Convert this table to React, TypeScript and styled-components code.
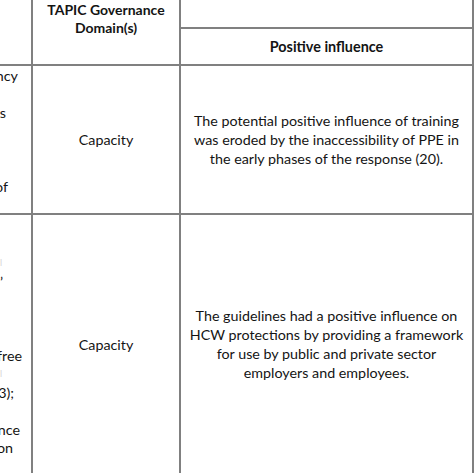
import React from 'react';
import styled, { createGlobalStyle } from 'styled-components';

const GlobalStyle = createGlobalStyle`
  html, body {
    margin: 0;
    padding: 0;
    background: #ffffff;
  }
  body {
    font-family: Lato, 'Open Sans', sans-serif;
    color: #141414;
  }
`;

const Page = styled.div`
  width: 474px;
  height: 474px;
  overflow: hidden;
  background: #ffffff;
`;

const Table = styled.div`
  display: grid;
  grid-template-columns: 33px 148px 293px;
  grid-template-rows: 66px 149px 258px;
`;

// $open: the row continues past the crop, so no bottom rule is drawn
const Cell = styled.div<{ $align?: 'top' | 'center'; $open?: boolean }>`
  box-sizing: border-box;
  border-right: 2px solid #808080;
  border-bottom: ${(p) => (p.$open ? 'none' : '2px solid #808080')};
  display: flex;
  flex-direction: column;
  justify-content: ${(p) => (p.$align === 'top' ? 'flex-start' : 'center')};
  align-items: center;
  text-align: center;
  overflow: hidden;
`;

const ClippedCell = styled(Cell)<{ $top: number }>`
  align-items: stretch;
  justify-content: flex-start;
  padding-top: ${(p) => p.$top}px;
`;

const HeadText = styled.div`
  font-weight: 700;
  font-size: 14px;
  line-height: 18px;
  padding-top: 1px;
`;

const SplitHead = styled.div`
  box-sizing: border-box;
  border-right: 2px solid #808080;
  border-bottom: 2px solid #808080;
  display: grid;
  grid-template-rows: 29px 1fr;
`;

const GroupBox = styled.div`
  border-bottom: 2px solid #808080;
`;

const SubHead = styled.div`
  display: flex;
  align-items: center;
  justify-content: center;
  font-weight: 700;
  font-size: 14.4px;
`;

const Body = styled.div`
  font-size: 14.3px;
  line-height: 19px;
  padding: 0 6px;
`;

const Line = styled.div<{ $end?: number; $faint?: boolean }>`
  height: 18.5px;
  line-height: 18.5px;
  font-size: ${(p) => (p.$faint ? '9px' : '14.3px')};
  white-space: nowrap;
  display: flex;
  justify-content: flex-end;
  padding-right: ${(p) => (p.$end !== undefined ? 31 - p.$end : 0)}px;
  color: ${(p) => (p.$faint ? '#d6d6d6' : '#141414')};
`;

type Frag = { text: string; end?: number; faint?: boolean };

const rowOneLeft: Frag[] = [
  { text: 'ncy', end: 18 },
  { text: '' },
  { text: 's', end: 6 },
  { text: '' },
  { text: '' },
  { text: '' },
  { text: 'of', end: 8 },
];

const rowTwoLeft: Frag[] = [
  { text: 'l', end: 2, faint: true },
  { text: '’', end: 3 },
  { text: '' },
  { text: '' },
  { text: '' },
  { text: 'free', end: 22 },
  { text: 'l', end: 2, faint: true },
  { text: '3);', end: 14 },
  { text: '' },
  { text: 'nce', end: 20 },
  { text: 'on', end: 13 },
];

const LeftLines: React.FC<{ lines: Frag[] }> = ({ lines }) => (
  <>
    {lines.map((l, i) => (
      <Line key={i} $end={l.text ? l.end : undefined} $faint={l.faint}>
        {l.text || '\u00a0'}
      </Line>
    ))}
  </>
);

const App: React.FC = () => {
  return (
    <Page>
      <GlobalStyle />
      <Table>
        <Cell />
        <Cell $align="top">
          <HeadText>
            TAPIC Governance
            <br />
            Domain(s)
          </HeadText>
        </Cell>
        <SplitHead>
          <GroupBox />
          <SubHead>Positive influence</SubHead>
        </SplitHead>

        <ClippedCell $top={1}>
          <LeftLines lines={rowOneLeft} />
        </ClippedCell>
        <Cell>
          <Body>Capacity</Body>
        </Cell>
        <Cell>
          <Body>
            The potential positive influence of training
            <br />
            was eroded by the inaccessibility of PPE in
            <br />
            the early phases of the response (20).
          </Body>
        </Cell>

        <ClippedCell $top={39} $open>
          <LeftLines lines={rowTwoLeft} />
        </ClippedCell>
        <Cell $open>
          <Body>Capacity</Body>
        </Cell>
        <Cell $open>
          <Body>
            The guidelines had a positive influence on
            <br />
            HCW protections by providing a framework
            <br />
            for use by public and private sector
            <br />
            employers and employees.
          </Body>
        </Cell>
      </Table>
    </Page>
  );
};

export default App;
